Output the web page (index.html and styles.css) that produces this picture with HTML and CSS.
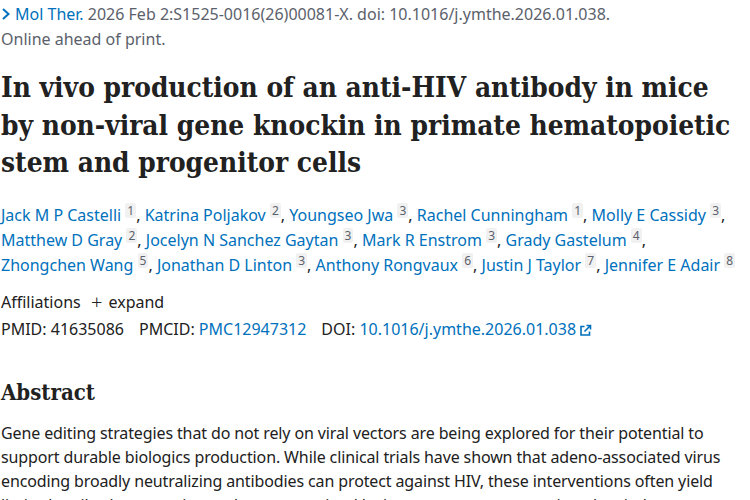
FILE: index.html
```html
<!DOCTYPE html>
<html lang="en">
<head>
<meta charset="utf-8">
<link rel="stylesheet" href="styles.css">
</head>
<body>
<main class="article">
  <div class="cit">
    <div class="cit-line"><span class="chev"><svg width="10" height="14" viewBox="0 0 10 14"><path d="M2 2 L7.5 7 L2 12" fill="none" stroke="#0071bc" stroke-width="2"/></svg></span><a class="link" href="#">Mol Ther.</a> 2026 Feb 2:S1525-0016(26)00081-X. doi: 10.1016/j.ymthe.2026.01.038.</div>
    <div class="cit-line">Online ahead of print.</div>
  </div>
  <h1 class="title">In vivo production of an anti-HIV antibody in mice by non-viral gene knockin in primate hematopoietic stem and progenitor cells</h1>
  <div class="authors">
    <span class="au"><a class="link" href="#">Jack M P Castelli</a> <sup class="ref">1</sup>,</span>
    <span class="au"><a class="link" href="#">Katrina Poljakov</a> <sup class="ref">2</sup>,</span>
    <span class="au"><a class="link" href="#">Youngseo Jwa</a> <sup class="ref">3</sup>,</span>
    <span class="au"><a class="link" href="#">Rachel Cunningham</a> <sup class="ref">1</sup>,</span>
    <span class="au"><a class="link" href="#">Molly E Cassidy</a> <sup class="ref">3</sup>,</span>
    <span class="au"><a class="link" href="#">Matthew D Gray</a> <sup class="ref">2</sup>,</span>
    <span class="au"><a class="link" href="#">Jocelyn N Sanchez Gaytan</a> <sup class="ref">3</sup>,</span>
    <span class="au"><a class="link" href="#">Mark R Enstrom</a> <sup class="ref">3</sup>,</span>
    <span class="au"><a class="link" href="#">Grady Gastelum</a> <sup class="ref">4</sup>,</span>
    <span class="au"><a class="link" href="#">Zhongchen Wang</a> <sup class="ref">5</sup>,</span>
    <span class="au"><a class="link" href="#">Jonathan D Linton</a> <sup class="ref">3</sup>,</span>
    <span class="au"><a class="link" href="#">Anthony Rongvaux</a> <sup class="ref">6</sup>,</span>
    <span class="au"><a class="link" href="#">Justin J Taylor</a> <sup class="ref">7</sup>,</span>
    <span class="au"><a class="link" href="#">Jennifer E Adair</a> <sup class="ref">8</sup></span>
  </div>
  <div class="affil">Affiliations <span class="expand"><span class="plus">+</span> expand</span></div>
  <div class="ids">
    <span class="id">PMID: 41635086</span>
    <span class="id">PMCID: <a class="link" href="#">PMC12947312</a></span>
    <span class="id">DOI: <a class="link" href="#">10.1016/j.ymthe.2026.01.038</a><svg class="ext" width="13" height="13" viewBox="0 0 13 13"><path d="M5.5 2.5 H2 V11 H10.5 V7.5" fill="none" stroke="#0071bc" stroke-width="1.6"/><path d="M7.5 1.5 H11.5 V5.5 M11.5 1.5 L5.5 7.5" fill="none" stroke="#0071bc" stroke-width="1.6"/></svg></span>
  </div>
  <h2 class="abs-h">Abstract</h2>
  <p class="abs">Gene editing strategies that do not rely on viral vectors are being explored for their potential to support durable biologics production. While clinical trials have shown that adeno-associated virus encoding broadly neutralizing antibodies can protect against HIV, these interventions often yield limited antibody expression and are constrained by immune responses against the viral vector.</p>
</main>
</body>
</html>
```

FILE: styles.css
```css
html, body {
  margin: 0;
  padding: 0;
  background: #fff;
}
body {
  font-family: "Noto Sans", "Open Sans", sans-serif;
  font-size: 16px;
  color: #212121;
}
.article {
  padding: 0 0 0 1px;
}
.link {
  color: #0071bc;
  text-decoration: none;
}
.cit {
  color: #5b616b;
  line-height: 24px;
  margin-top: 2px;
}
.chev {
  display: inline-block;
  width: 14px;
  vertical-align: -1px;
}
.title {
  font-family: "DejaVu Serif", serif;
  font-stretch: semi-condensed;
  font-weight: bold;
  font-size: 27.8px;
  line-height: 37.5px;
  margin: 18px 0 0 0;
  max-width: 735px;
  color: #212121;
}
.authors {
  line-height: 25px;
  margin-top: 21px;
}
.au {
  white-space: nowrap;
}
.ref {
  display: inline-block;
  background: #f1f1f1;
  color: #5b616b;
  font-size: 12px;
  line-height: 15px;
  padding: 0 2px;
  vertical-align: 6px;
  border-radius: 2px;
}
.affil {
  margin-top: 11px;
  line-height: 25px;
}
.expand {
  margin-left: 6px;
}
.plus {
  font-size: 20px;
  font-weight: 300;
  vertical-align: -1px;
  margin-right: 2px;
}
.ids {
  line-height: 25px;
  margin-top: 2px;
  display: flex;
  gap: 15px;
}
.ext {
  margin-left: 3px;
  vertical-align: -2px;
}
.abs-h {
  font-family: "DejaVu Serif", serif;
  font-stretch: semi-condensed;
  font-weight: bold;
  font-size: 22px;
  margin: 35px 0 14px 0;
  line-height: 30px;
}
.abs {
  margin: 0;
  line-height: 24px;
  letter-spacing: -0.12px;
}
```
